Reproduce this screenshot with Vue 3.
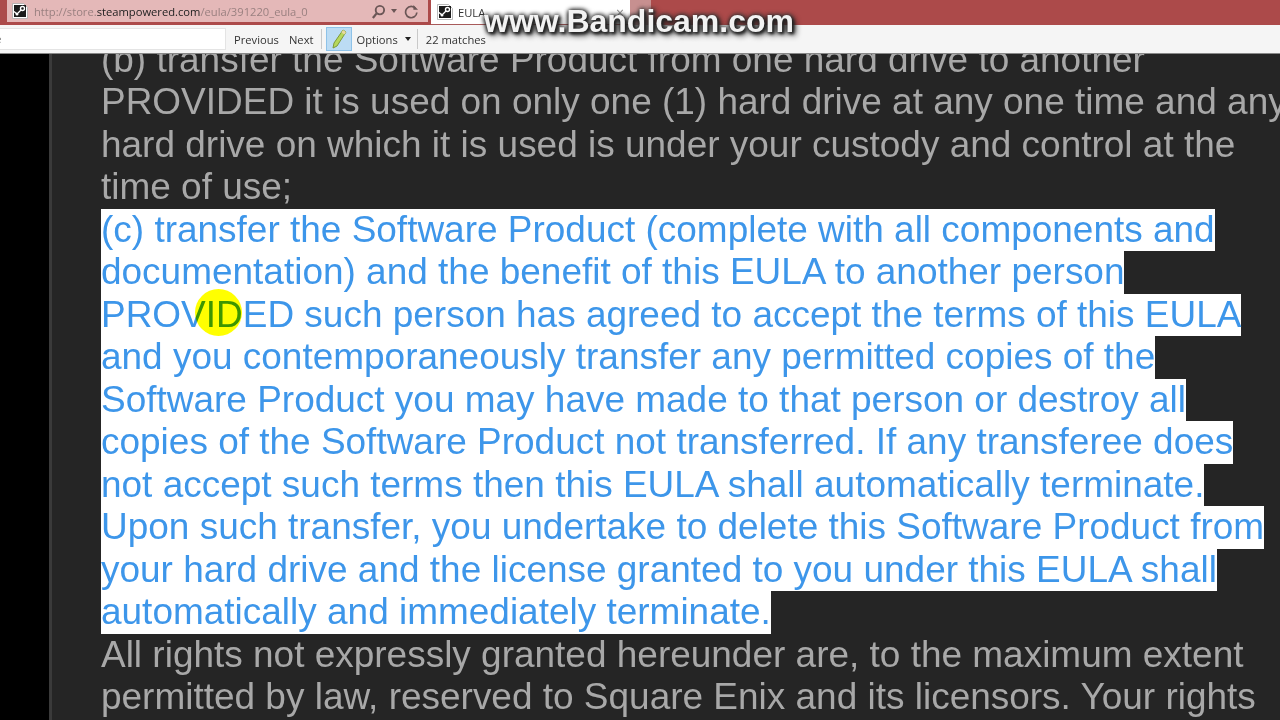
<script setup>
const before = [
  '(b) transfer the Software Product from one hard drive to another',
  'PROVIDED it is used on only one (1) hard drive at any one time and any',
  'hard drive on which it is used is under your custody and control at the',
  'time of use;'
]
const selected = [
  '(c) transfer the Software Product (complete with all components and',
  'documentation) and the benefit of this EULA to another person',
  'PROVIDED such person has agreed to accept the terms of this EULA',
  'and you contemporaneously transfer any permitted copies of the',
  'Software Product you may have made to that person or destroy all',
  'copies of the Software Product not transferred. If any transferee does',
  'not accept such terms then this EULA shall automatically terminate.',
  'Upon such transfer, you undertake to delete this Software Product from',
  'your hard drive and the license granted to you under this EULA shall',
  'automatically and immediately terminate.'
]
const after = [
  'All rights not expressly granted hereunder are, to the maximum extent',
  'permitted by law, reserved to Square Enix and its licensors. Your rights'
]
</script>

<template>
  <div class="screen">
    <header class="titlebar">
      <div class="address">
        <svg class="steam" viewBox="0 0 16 16"><path d="M0.5 0.5h11l4 4v11h-15z" fill="#fff" stroke="#aaa" stroke-width="0.8"/><rect x="2" y="2" width="12" height="12" fill="#1b1b1b"/><circle cx="10.5" cy="5.5" r="2" fill="none" stroke="#fff" stroke-width="1.4"/><circle cx="5" cy="11" r="1.5" fill="#fff"/><path d="M2 8.5l3 2.5M6 10l3-3" stroke="#fff" stroke-width="1.3"/></svg>
        <span class="url">http://store.<b>steampowered.com</b>/eula/391220_eula_0</span>
        <svg class="search" viewBox="0 0 16 16"><circle cx="9.5" cy="6.5" r="4.5" fill="none" stroke="#6b5656" stroke-width="2"/><path d="M6 10l-4 5" stroke="#6b5656" stroke-width="2.4"/></svg>
        <span class="caret"></span>
        <svg class="refresh" viewBox="0 0 16 16"><path d="M12.5 5a6 6 0 1 0 1.2 4" fill="none" stroke="#6b5656" stroke-width="1.8"/><path d="M10 1v5h5z" fill="#6b5656"/></svg>
      </div>
      <div class="tab">
        <svg class="steam" viewBox="0 0 16 16"><path d="M0.5 0.5h11l4 4v11h-15z" fill="#fff" stroke="#aaa" stroke-width="0.8"/><rect x="2" y="2" width="12" height="12" fill="#1b1b1b"/><circle cx="10.5" cy="5.5" r="2" fill="none" stroke="#fff" stroke-width="1.4"/><circle cx="5" cy="11" r="1.5" fill="#fff"/><path d="M2 8.5l3 2.5M6 10l3-3" stroke="#fff" stroke-width="1.3"/></svg>
        <span>EULA</span>
        <span class="close">×</span>
      </div>
      <div class="newtab"></div>
    </header>

    <div class="findbar">
      <div class="findinput">e</div>
      <span class="findbtn first">Previous</span>
      <span class="findbtn">Next</span>
      <span class="sep"></span>
      <span class="pen">
        <svg viewBox="0 0 18 22" width="18" height="22"><path d="M13 2l3 2-9 14-4 2 1-5z" fill="#b7d85c" stroke="#7d9a3a"/><path d="M13 2l3 2-1.5 2.4-3-2z" fill="#e9d9a0"/></svg>
      </span>
      <span class="findbtn opts">Options</span>
      <span class="tri"></span>
      <span class="sep last"></span>
      <span class="matches">22 matches</span>
    </div>

    <main class="page">
      <div class="gutter"></div>
      <div class="rule"></div>
      <article class="doc">
        <div v-for="l in before" :key="l" class="line">{{ l }}</div>
        <div v-for="l in selected" :key="l" class="line sel">{{ l }}</div>
        <div v-for="l in after" :key="l" class="line">{{ l }}</div>
      </article>
    </main>

    <div class="pointer"></div>
    <div class="watermark">www.Bandicam.com</div>
  </div>
</template>

<style>
html, body { margin: 0; background: #000; }
</style>

<style scoped>
.screen { width: 1280px; height: 720px; overflow: hidden; position: relative; display: flex; flex-direction: column; font-family: "Liberation Sans", Arial, sans-serif; background: #000; }

.titlebar { height: 25px; background: #ac4a4a; display: flex; flex: none; }
.address { width: 421px; height: 22px; margin-left: 7px; background: #e4b8b8; display: flex; align-items: center; box-sizing: border-box; padding-left: 5px; }
.steam { width: 16px; height: 16px; flex: none; }
.url { font-family: "Open Sans", sans-serif; font-size: 11.2px; color: #9a8080; margin-left: 6px; width: 337px; white-space: nowrap; overflow: hidden; }
.url b { font-weight: 400; color: #222; }
.search { width: 15px; height: 15px; }
.caret { width: 0; height: 0; border: 3.5px solid transparent; border-top: 4px solid #6b5656; border-bottom: 0; margin: 0 7px 0 5px; }
.refresh { width: 15px; height: 15px; }
.tab { width: 199px; height: 25px; margin-left: 3px; background: #fff; display: flex; align-items: center; box-sizing: border-box; padding-left: 6px; gap: 5px; font-family: "Open Sans", sans-serif; font-size: 11.2px; color: #333; position: relative; border-bottom: 1px solid #a85a5a; }
.close { position: absolute; right: 6px; top: 3px; font-size: 14px; color: #888; }
.newtab { width: 21px; height: 25px; background: #c79090; }

.findbar { height: 28px; flex: none; background: #f5f5f5; display: flex; align-items: center; font-family: "Open Sans", sans-serif; font-size: 11.2px; color: #333; }
.findinput { width: 226px; height: 22px; background: #fff; border: 1px solid #e4e4e4; border-left: 0; box-sizing: border-box; margin-right: 8px; line-height: 19px; text-indent: -5px; overflow: hidden; }
.findbtn.first { margin-right: 10px; }
.sep { width: 1px; height: 20px; background: #c9c9c9; margin: 0 4px 0 8px; }
.sep.last { margin-left: 6px; margin-right: 6px; }
.pen { width: 26px; height: 24px; background: #bcdcf4; border: 1px solid #8ec2e8; box-sizing: border-box; display: flex; align-items: center; justify-content: center; margin-right: 4px; }
.tri { width: 0; height: 0; border: 3.5px solid transparent; border-top: 4px solid #222; border-bottom: 0; margin-left: 7px; }
.matches { margin-left: 2px; }

.page { flex: 1; display: flex; min-height: 0; overflow: hidden; border-top: 1px solid #888; }
.gutter { width: 49px; background: #000; flex: none; }
.rule { width: 3px; background: #3a3a3a; flex: none; }
.doc { flex: 1; background: #252525; padding-left: 49px; margin-top: -15.5px; font-size: 36.97px; line-height: 42.5px; color: #a8a8a8; white-space: nowrap; }
.line { width: fit-content; height: 42.5px; }
.sel { background: #fff; color: #3d96ea; }

.pointer { position: absolute; left: 195px; top: 289px; width: 47px; height: 47px; border-radius: 50%; background: #ffff00; mix-blend-mode: multiply; }

.watermark { position: absolute; left: 484px; top: 2px; font-weight: 700; font-size: 32px; line-height: 38px; color: #f2f2f2; text-shadow: 2px 2px 3px #222, -1px 1px 4px #222, 1px -1px 4px #444, 3px 3px 6px #111; white-space: nowrap; }
</style>
